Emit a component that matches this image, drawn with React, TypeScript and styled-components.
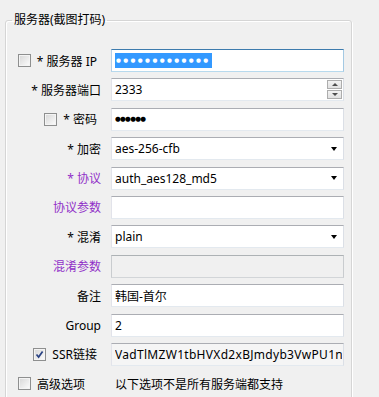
import styled, { createGlobalStyle } from "styled-components";

const GlobalStyle = createGlobalStyle`
  html, body {
    margin: 0;
    padding: 0;
    overflow: hidden;
    background: #f0f0f0;
  }
  body {
    font-family: "Noto Sans", "Noto Sans CJK SC", sans-serif;
    font-size: 12px;
    color: #000;
  }
`;

const Group = styled.fieldset`
  margin: 12px 0 0 5px;
  width: 347px;
  height: 420px;
  box-sizing: border-box;
  padding: 0;
  border: 1px solid #d5d5d5;
  border-radius: 3px;
  box-shadow: inset 1px 1px 0 #fff, 1px 1px 0 #fff;
`;

const Title = styled.legend`
  margin-left: 6px;
  padding: 0 2px;
  line-height: 16px;
`;

const Form = styled.div`
  display: grid;
  grid-template-columns: 95px 233px;
  column-gap: 10px;
  grid-auto-rows: 23px;
  row-gap: 6.4px;
  padding-top: 21px;
`;

const Label = styled.div<{ $purple?: boolean; $pad?: number; $left?: boolean }>`
  display: flex;
  align-items: center;
  justify-content: ${(p) => (p.$left ? "flex-start" : "flex-end")};
  gap: 6px;
  padding-right: ${(p) => p.$pad ?? 0}px;
  padding-left: ${(p) => (p.$left ? 12 : 0)}px;
  color: ${(p) => (p.$purple ? "#9030c8" : "#000")};
  white-space: nowrap;
`;

type Variant = "normal" | "focus" | "disabled" | "readonly";

const borders: Record<Variant, string> = {
  normal: "border-color: #abadb3 #dbdfe6 #e3e9ef #e2e3ea;",
  focus: "border-color: #3d7bad #a4c9e3 #b7d9ed #b5cfe7;",
  disabled: "border-color: #adb2b5 #c9cccf #d2d5d8 #c9cccf;",
  readonly: "border-color: #abadb3 #dbdfe6 #e3e9ef #e2e3ea;",
};

const Field = styled.div<{ $variant?: Variant }>`
  display: flex;
  align-items: center;
  box-sizing: border-box;
  height: 23px;
  padding: 0 1px 0 3px;
  border: 1px solid;
  ${(p) => borders[p.$variant ?? "normal"]}
  background: ${(p) =>
    p.$variant === "disabled" ? "#f0f0f0" : p.$variant === "readonly" ? "#f5f5f5" : "#fff"};
  white-space: nowrap;
  overflow: hidden;
`;

const Value = styled.span<{ $spread?: boolean }>`
  flex: 1;
  display: flex;
  align-items: center;
  overflow: hidden;
  letter-spacing: ${(p) => (p.$spread ? "0.3px" : "normal")};
`;

const Selection = styled.span`
  display: inline-flex;
  align-items: center;
  height: 15px;
  padding: 0 1px;
  background: #3399ff;
  color: #fff;
`;

const Dots = styled.span<{ $big?: boolean }>`
  font-family: "DejaVu Sans", sans-serif;
  line-height: 1;
  font-size: ${(p) => (p.$big ? 6.6 : 5.6)}px;
  letter-spacing: ${(p) => (p.$big ? -0.7 : 2.4)}px;
`;

const Arrow = styled.span`
  width: 0;
  height: 0;
  margin-right: 5px;
  border-left: 3.5px solid transparent;
  border-right: 3.5px solid transparent;
  border-top: 4px solid #000;
`;

const Spin = styled.div`
  display: flex;
  flex-direction: column;
  gap: 1px;
  width: 15px;
  height: 19px;
`;

const SpinButton = styled.div<{ $up?: boolean }>`
  flex: 1;
  display: flex;
  align-items: center;
  justify-content: center;
  box-sizing: border-box;
  border: 1px solid #adadad;
  background: linear-gradient(#f2f2f2, #e1e1e1);

  &::after {
    content: "";
    border-left: 3px solid transparent;
    border-right: 3px solid transparent;
    ${(p) => (p.$up ? "border-bottom: 3px solid #4d4d4d;" : "border-top: 3px solid #4d4d4d;")}
  }
`;

const Box = styled.span`
  display: inline-flex;
  align-items: center;
  justify-content: center;
  width: 13px;
  height: 13px;
  box-sizing: border-box;
  border: 1px solid #8e8f8f;
  background: linear-gradient(135deg, #d6d6d6, #fdfdfd);
  box-shadow: inset 0 0 0 1px #f4f4f4;
`;

const Check = ({ checked }: { checked?: boolean }) => (
  <Box>
    {checked && (
      <svg width="9" height="9" viewBox="0 0 9 9">
        <path d="M1.5 4.5 L3.6 7 L7.6 1.5" fill="none" stroke="#2a4384" strokeWidth="1.7" />
      </svg>
    )}
  </Box>
);

const Note = styled.div`
  display: flex;
  align-items: center;
  padding-left: 4px;
  white-space: nowrap;
`;

const Combo = ({ value }: { value: string }) => (
  <Field>
    <Value>{value}</Value>
    <Arrow />
  </Field>
);

export default function App() {
  return (
    <>
      <GlobalStyle />
      <Group>
        <Title>服务器(截图打码)</Title>
        <Form>
          <Label $pad={4}>
            <Check />
            <span>* 服务器 IP</span>
          </Label>
          <Field $variant="focus">
            <Value>
              <Selection>
                <Dots>●●●●●●●●●●●●●</Dots>
              </Selection>
            </Value>
          </Field>

          <Label>* 服务器端口</Label>
          <Field>
            <Value>2333</Value>
            <Spin>
              <SpinButton $up />
              <SpinButton />
            </Spin>
          </Field>

          <Label $pad={4}>
            <Check />
            <span>* 密码</span>
          </Label>
          <Field>
            <Value>
              <Dots $big>●●●●●●</Dots>
            </Value>
          </Field>

          <Label>* 加密</Label>
          <Combo value="aes-256-cfb" />

          <Label $purple>* 协议</Label>
          <Combo value="auth_aes128_md5" />

          <Label $purple>协议参数</Label>
          <Field />

          <Label>* 混淆</Label>
          <Combo value="plain" />

          <Label $purple>混淆参数</Label>
          <Field $variant="disabled" />

          <Label>备注</Label>
          <Field>
            <Value>韩国-首尔</Value>
          </Field>

          <Label>Group</Label>
          <Field>
            <Value>2</Value>
          </Field>

          <Label $pad={4}>
            <Check checked />
            <span>SSR链接</span>
          </Label>
          <Field $variant="readonly">
            <Value $spread>VadTlMZW1tbHVXd2xBJmdyb3VwPU1n</Value>
          </Field>

          <Label $left>
            <Check />
            <span>高级选项</span>
          </Label>
          <Note>以下选项不是所有服务端都支持</Note>
        </Form>
      </Group>
    </>
  );
}
